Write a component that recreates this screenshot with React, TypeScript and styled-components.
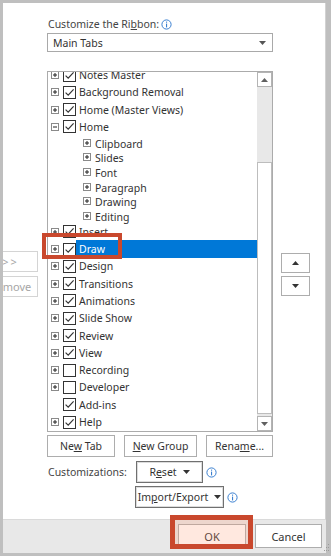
import * as React from 'react';
import styled, { createGlobalStyle } from 'styled-components';

const GlobalStyle = createGlobalStyle`
  html, body {
    margin: 0;
    padding: 0;
  }
  body {
    background: #bfbfbf;
    font-family: 'Noto Sans', 'Open Sans', sans-serif;
    font-size: 10.5px;
    color: #333;
  }
`;

const Frame = styled.div`
  width: 331px;
  height: 556px;
  box-sizing: border-box;
  padding: 3px 5px 3px 3px;
  overflow: hidden;
`;

const Dialog = styled.div`
  height: 550px;
  display: flex;
  flex-direction: column;
  background: #e8e8e8;
`;

const Panel = styled.div`
  height: 517px;
  flex: none;
  box-sizing: border-box;
  display: flex;
  background: #fff;
  border-right: 1px solid #d2d2d2;
  border-bottom: 1px solid #dadada;
  overflow: hidden;
`;

const LeftCol = styled.div`
  width: 44px;
  flex: none;
  display: flex;
  flex-direction: column;
  gap: 4px;
  padding-top: 248px;
`;

const SideButton = styled.div<{ $spaced?: boolean }>`
  width: 55px;
  height: 21px;
  margin-left: -20px;
  box-sizing: border-box;
  border: 1px solid #d4d4d4;
  background: #fff;
  color: #a6a6a6;
  font-size: 11px;
  display: flex;
  align-items: center;
  justify-content: center;
  letter-spacing: ${(p) => (p.$spaced ? '2px' : '0')};
`;

const MainCol = styled.div`
  width: 226px;
  flex: none;
  padding-top: 13px;
  display: flex;
  flex-direction: column;
`;

const Label = styled.div`
  height: 16px;
  display: flex;
  align-items: center;
  gap: 2px;
  color: #444;
  white-space: nowrap;
  padding-left: 1px;
`;

const Select = styled.div`
  margin-top: 1px;
  height: 19px;
  box-sizing: border-box;
  border: 1px solid #a9a9a9;
  display: flex;
  align-items: center;
  justify-content: space-between;
  padding: 0 6px 0 5px;
  color: #333;
`;

const ListWrap = styled.div`
  position: relative;
  margin-top: 19px;
`;

const List = styled.div`
  height: 361px;
  box-sizing: border-box;
  border: 1px solid #ababab;
  display: flex;
  overflow: hidden;
`;

const Items = styled.div`
  flex: 1;
  overflow: hidden;
  display: flex;
  flex-direction: column;
`;

const ItemsInner = styled.div`
  margin-top: -5.65px;
`;

const Row = styled.div<{ $sub?: boolean }>`
  height: ${(p) => (p.$sub ? '14.6px' : '17.3px')};
  display: flex;
  align-items: center;
  padding-left: ${(p) => (p.$sub ? '35px' : '3px')};
  white-space: nowrap;
`;

const Slot = styled.span`
  width: 8px;
  height: 8px;
  flex: none;
  display: flex;
`;

const CheckSlot = styled.span`
  width: 13px;
  height: 13px;
  flex: none;
  margin-left: 4px;
  display: flex;
`;

const ItemText = styled.span<{ $selected?: boolean; $sub?: boolean }>`
  flex: 1;
  align-self: stretch;
  display: flex;
  align-items: center;
  padding-left: ${(p) => (p.$sub ? '4px' : '3px')};
  padding-top: ${(p) => (p.$sub ? '2px' : '0')};
  background: ${(p) => (p.$selected ? '#0078d7' : 'transparent')};
  color: ${(p) => (p.$selected ? '#fff' : '#333')};
`;

const ScrollBar = styled.div`
  width: 15px;
  flex: none;
  display: flex;
  flex-direction: column;
  background: #e8e8e8;
`;

const ScrollArrow = styled.div`
  height: 15px;
  flex: none;
  box-sizing: border-box;
  border: 1px solid #b4b4b4;
  background: #fff;
  display: flex;
  align-items: center;
  justify-content: center;
`;

const Track = styled.div`
  flex: 1;
  display: flex;
  flex-direction: column;
  padding: 75px 0 2px;
`;

const Thumb = styled.div`
  flex: 1;
  box-sizing: border-box;
  border: 1px solid #bdbdbd;
  background: #fff;
`;

const Callout = styled.div<{ $w: number }>`
  position: absolute;
  box-sizing: border-box;
  border: ${(p) => p.$w}px solid #c9482d;
  pointer-events: none;
`;

const DrawCallout = styled(Callout)`
  left: -5px;
  top: 161.5px;
  width: 80px;
  height: 26px;
`;

const ButtonRow = styled.div`
  margin-top: 3px;
  display: flex;
  gap: 9px;
`;

const Button = styled.div<{ $w: number; $strong?: boolean }>`
  width: ${(p) => p.$w}px;
  height: 22px;
  flex: none;
  box-sizing: border-box;
  border: 1px solid ${(p) => (p.$strong ? '#707070' : '#adadad')};
  box-shadow: ${(p) => (p.$strong ? 'inset 0 0 0 1px #dcdcdc' : 'none')};
  background: #fff;
  color: #333;
  display: flex;
  align-items: center;
  justify-content: center;
  gap: 6px;
  white-space: nowrap;
`;

const OptionRow = styled.div<{ $indent?: boolean }>`
  margin-top: ${(p) => (p.$indent ? '3px' : '4px')};
  padding-left: ${(p) => (p.$indent ? '88px' : '0')};
  display: flex;
  align-items: center;
  gap: 3px;
`;

const OptionLabel = styled.span`
  width: 85px;
  flex: none;
  color: #444;
  padding-left: 1px;
`;

const RightCol = styled.div`
  margin-left: 8px;
  padding-top: 250px;
  display: flex;
  flex-direction: column;
  gap: 3px;
`;

const MoveButton = styled.div`
  width: 29px;
  height: 20px;
  box-sizing: border-box;
  border: 1px solid #adadad;
  background: #fff;
  display: flex;
  align-items: center;
  justify-content: center;
`;

const Footer = styled.div`
  flex: 1;
  position: relative;
  display: flex;
  justify-content: flex-end;
  gap: 9px;
  padding: 4px 4px 0 0;
`;

const FooterButton = styled.div<{ $w: number }>`
  position: relative;
  width: ${(p) => p.$w}px;
  height: 24px;
  box-sizing: border-box;
  border: 1px solid #adadad;
  background: #fff;
  color: #333;
  font-size: 11px;
  display: flex;
  align-items: center;
  justify-content: center;
`;

const OkCallout = styled(Callout)`
  left: -9px;
  top: -10px;
  width: 83px;
  height: 34px;
  background: rgba(255, 150, 110, 0.22);
`;

const Grip = styled.svg`
  position: absolute;
  right: -4px;
  bottom: 2px;
`;

const U = styled.span`
  text-decoration: underline;
  text-underline-offset: 1px;
`;

const Info = () => (
  <svg width="11" height="11" viewBox="0 0 11 11">
    <circle cx="5.5" cy="5.5" r="4.6" fill="none" stroke="#3a7fd0" strokeWidth="1" />
    <rect x="5" y="2.6" width="1.1" height="1.1" fill="#3a7fd0" />
    <rect x="5" y="4.6" width="1.1" height="3.8" fill="#3a7fd0" />
  </svg>
);

const Caret = ({ up = false, color = '#333' }: { up?: boolean; color?: string }) => (
  <svg width="7" height="4" viewBox="0 0 7 4">
    <path d={up ? 'M0 4 L3.5 0 L7 4 Z' : 'M0 0 L7 0 L3.5 4 Z'} fill={color} />
  </svg>
);

const Expander = ({ open = false }: { open?: boolean }) => (
  <svg width="8" height="8" viewBox="0 0 8 8">
    <rect x="0.5" y="0.5" width="7" height="7" fill="#fff" stroke="#8a8a8a" />
    <path d="M2 4 H6" stroke="#222" strokeWidth="1" />
    {!open && <path d="M4 2 V6" stroke="#222" strokeWidth="1" />}
  </svg>
);

const Check = ({ checked }: { checked: boolean }) => (
  <svg width="13" height="13" viewBox="0 0 13 13">
    <rect x="0.5" y="0.5" width="12" height="12" fill="#fff" stroke="#333" />
    {checked && <path d="M2.6 6.6 L5.2 9.2 L10.6 3.4" fill="none" stroke="#333" strokeWidth="1.2" />}
  </svg>
);

type Item = {
  label: string;
  sub?: boolean;
  exp?: 'plus' | 'minus' | 'none';
  checked?: boolean;
  selected?: boolean;
};

const items: Item[] = [
  { label: 'Notes Master', exp: 'plus', checked: true },
  { label: 'Background Removal', exp: 'plus', checked: true },
  { label: 'Home (Master Views)', exp: 'plus', checked: true },
  { label: 'Home', exp: 'minus', checked: true },
  { label: 'Clipboard', sub: true },
  { label: 'Slides', sub: true },
  { label: 'Font', sub: true },
  { label: 'Paragraph', sub: true },
  { label: 'Drawing', sub: true },
  { label: 'Editing', sub: true },
  { label: 'Insert', exp: 'plus', checked: true },
  { label: 'Draw', exp: 'plus', checked: true, selected: true },
  { label: 'Design', exp: 'plus', checked: true },
  { label: 'Transitions', exp: 'plus', checked: true },
  { label: 'Animations', exp: 'plus', checked: true },
  { label: 'Slide Show', exp: 'plus', checked: true },
  { label: 'Review', exp: 'plus', checked: true },
  { label: 'View', exp: 'plus', checked: true },
  { label: 'Recording', exp: 'plus', checked: false },
  { label: 'Developer', exp: 'plus', checked: false },
  { label: 'Add-ins', exp: 'none', checked: true },
  { label: 'Help', exp: 'plus', checked: true },
];

const App = (): JSX.Element => {
  return (
    <Frame>
      <GlobalStyle />
      <Dialog>
        <Panel>
          <LeftCol>
            <SideButton $spaced>{'>>'}</SideButton>
            <SideButton>{'Remove'}</SideButton>
          </LeftCol>

          <MainCol>
            <Label>
              <span>Customize the Ri<U>b</U>bon:</span>
              <Info />
            </Label>
            <Select>
              <span>{'Main Tabs'}</span>
              <Caret color="#555" />
            </Select>

            <ListWrap>
              <List>
                <Items>
                  <ItemsInner>
                    {items.map((it) => (
                      <Row key={it.label} $sub={it.sub}>
                        <Slot>
                          {it.exp === 'plus' || it.sub ? <Expander /> : null}
                          {it.exp === 'minus' ? <Expander open /> : null}
                        </Slot>
                        {!it.sub && (
                          <CheckSlot>
                            <Check checked={!!it.checked} />
                          </CheckSlot>
                        )}
                        <ItemText $selected={it.selected} $sub={it.sub}>{it.label}</ItemText>
                      </Row>
                    ))}
                  </ItemsInner>
                </Items>
                <ScrollBar>
                  <ScrollArrow><Caret up color="#606060" /></ScrollArrow>
                  <Track><Thumb /></Track>
                  <ScrollArrow><Caret color="#606060" /></ScrollArrow>
                </ScrollBar>
              </List>
              <DrawCallout $w={4} />
            </ListWrap>

            <ButtonRow>
              <Button $w={68}><span>Ne<U>w</U> Tab</span></Button>
              <Button $w={73}><span><U>N</U>ew Group</span></Button>
              <Button $w={67}><span>Rena<U>m</U>e...</span></Button>
            </ButtonRow>

            <OptionRow>
              <OptionLabel>{'Customizations:'}</OptionLabel>
              <Button $w={67} $strong><span>R<U>e</U>set</span><Caret /></Button>
              <Info />
            </OptionRow>
            <OptionRow $indent>
              <Button $w={89} $strong><span>Im<U>p</U>ort/Export</span><Caret /></Button>
              <Info />
            </OptionRow>
          </MainCol>

          <RightCol>
            <MoveButton><Caret up /></MoveButton>
            <MoveButton><Caret /></MoveButton>
          </RightCol>
        </Panel>

        <Footer>
          <FooterButton $w={68}>
            {'OK'}
            <OkCallout $w={5} />
          </FooterButton>
          <FooterButton $w={67}>{'Cancel'}</FooterButton>
          <Grip width="6" height="7" viewBox="0 0 6 7">
            <rect x="4" y="0" width="1" height="1" fill="#9a9a9a" />
            <rect x="2" y="3" width="1" height="1" fill="#9a9a9a" />
            <rect x="4" y="3" width="1" height="1" fill="#9a9a9a" />
            <rect x="0" y="6" width="1" height="1" fill="#9a9a9a" />
            <rect x="2" y="6" width="1" height="1" fill="#9a9a9a" />
            <rect x="4" y="6" width="1" height="1" fill="#9a9a9a" />
          </Grip>
        </Footer>
      </Dialog>
    </Frame>
  );
};

export default App;
